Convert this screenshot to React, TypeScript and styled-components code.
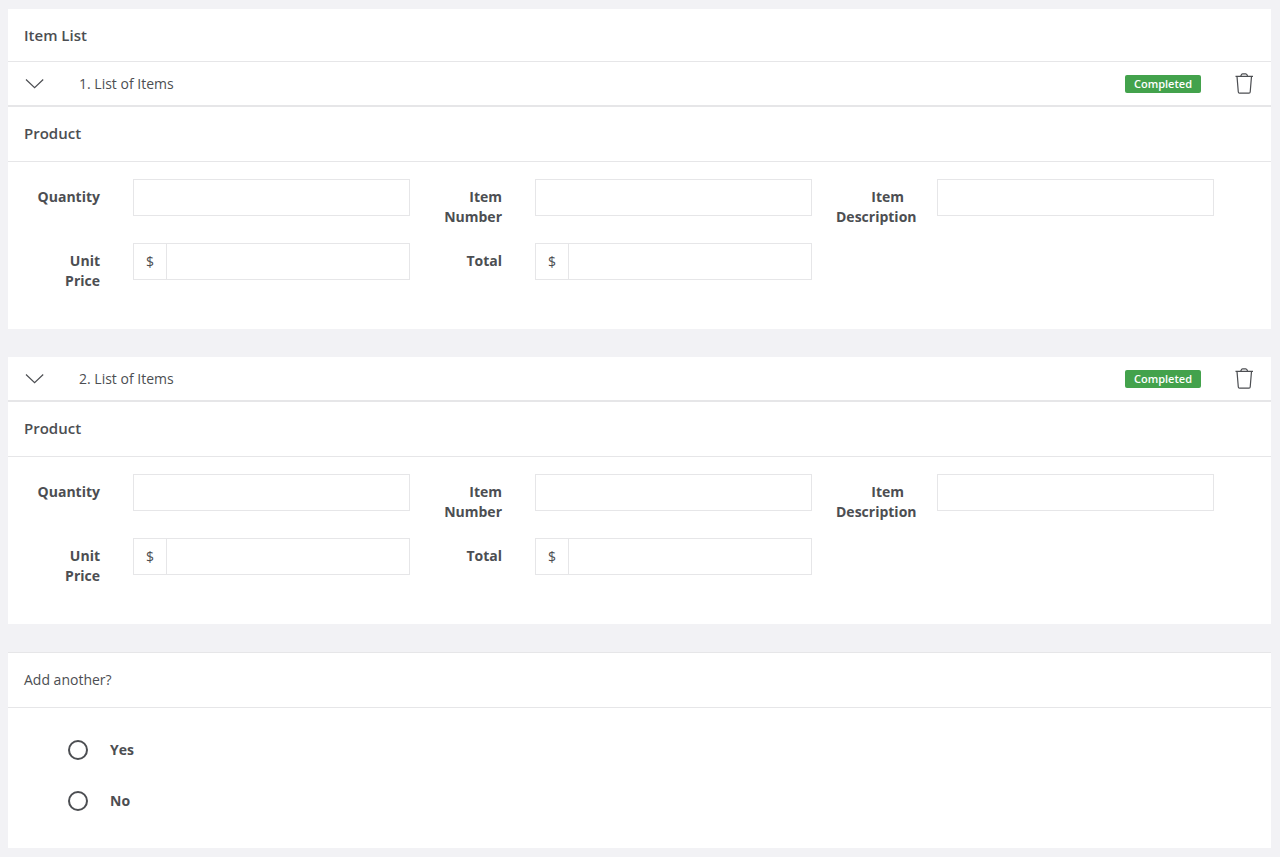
import React from "react";
import styled, { createGlobalStyle } from "styled-components";

const ink = "#4c4e52";
const line = "#e6e6e8";

const GlobalStyle = createGlobalStyle`
  *, *::before, *::after { box-sizing: border-box; }
  body {
    margin: 0;
    background: #f2f2f5;
    color: ${ink};
    font: 14px/20px "Open Sans", "Noto Sans", sans-serif;
  }
`;

const Page = styled.main`
  display: flex;
  flex-direction: column;
  gap: 28px;
  padding: 9px 9px 9px 8px;
`;

const Panel = styled.section`
  background: #fff;
`;

const QuestionPanel = styled(Panel)`
  border-top: 1px solid ${line};
`;

const PanelTitle = styled.h1`
  margin: 0;
  padding: 16px;
  border-bottom: 1px solid ${line};
  font-size: 15px;
  font-weight: 600;
  line-height: 20px;
`;

const SectionTitle = styled.h2`
  margin: 0;
  padding: 16px 16px 18px;
  border-bottom: 1px solid ${line};
  font-size: 15px;
  font-weight: 600;
  line-height: 20px;
`;

const ItemHeader = styled.header`
  display: flex;
  align-items: center;
  height: 45px;
  padding: 1px 16px 0;
  border-bottom: 2px solid ${line};
`;

const IconButton = styled.button`
  display: flex;
  padding: 0;
  border: 0;
  background: none;
  color: ${ink};
  cursor: pointer;
`;

const ItemName = styled.span`
  flex: 1;
  margin-left: 34px;
`;

const Badge = styled.span`
  margin-right: 32px;
  padding: 0 9px;
  border-radius: 2px;
  background: #43a24c;
  color: #fff;
  font-size: 11px;
  font-weight: 600;
  line-height: 18px;
`;

const Fields = styled.div`
  display: grid;
  grid-template-columns: repeat(3, minmax(0, 1fr));
  row-gap: 16px;
  padding: 17px 57px 38px 0;
`;

const Field = styled.div`
  display: flex;
  align-items: flex-start;
`;

const Label = styled.label`
  width: 68px;
  margin: 8px 33px 0 24px;
  font-weight: 700;
  text-align: right;
`;

const InputBox = styled.div`
  display: flex;
  flex: 1;
  height: 37px;
  border: 1px solid ${line};
`;

const Prefix = styled.span`
  width: 33px;
  border-right: 1px solid ${line};
  line-height: 36px;
  text-align: center;
`;

const Input = styled.input`
  flex: 1;
  min-width: 0;
  padding: 0 10px;
  border: 0;
  background: none;
  color: inherit;
  font: inherit;
`;

const Choices = styled.fieldset`
  margin: 0;
  padding: 0;
  border: 0;
`;

const Question = styled.legend`
  width: 100%;
  padding: 17px 16px;
  border-bottom: 1px solid ${line};
`;

const Options = styled.div`
  display: flex;
  flex-direction: column;
  gap: 31px;
  padding: 32px 60px 37px;
`;

const Option = styled.label`
  display: flex;
  align-items: center;
  gap: 22px;
  font-weight: 700;
`;

const Radio = styled.input`
  appearance: none;
  width: 20px;
  height: 20px;
  margin: 0;
  border: 2px solid ${ink};
  border-radius: 50%;
  &:checked {
    box-shadow: inset 0 0 0 3px #fff;
    background: ${ink};
  }
`;

const ChevronIcon = () => (
  <svg width="21" height="20" viewBox="0 0 21 20" fill="none" stroke="currentColor" strokeWidth="1.2" aria-hidden="true">
    <path d="M2 5.5 10.6 13.7 19.2 5.5" />
  </svg>
);

const TrashIcon = () => (
  <svg width="22" height="22" viewBox="0 0 22 22" fill="none" stroke="currentColor" strokeWidth="1.2" aria-hidden="true">
    <path d="M2.5 3.4H20M7.6 3.4C8.2 2 8.4 .9 9.6 .9H12.8C14 .9 14.3 2 14.8 3.4M4 3.4 5.3 19Q5.4 20.1 6.5 20.1H16Q17.1 20.1 17.2 19L18.5 3.4" />
  </svg>
);

const fields = [
  { id: "quantity", label: "Quantity" },
  { id: "number", label: "Item Number" },
  { id: "description", label: "Item Description" },
  { id: "price", label: "Unit Price", prefix: "$" },
  { id: "total", label: "Total", prefix: "$" },
];

function Item({ index }: { index: number }) {
  return (
    <>
      <ItemHeader>
        <IconButton type="button" aria-label="Collapse item"><ChevronIcon /></IconButton>
        <ItemName>{index}. List of Items</ItemName>
        <Badge>Completed</Badge>
        <IconButton type="button" aria-label="Delete item"><TrashIcon /></IconButton>
      </ItemHeader>
      <SectionTitle>Product</SectionTitle>
      <Fields>
        {fields.map(({ id, label, prefix }) => (
          <Field key={id}>
            <Label htmlFor={`${id}-${index}`}>{label}</Label>
            <InputBox>
              {prefix && <Prefix>{prefix}</Prefix>}
              <Input id={`${id}-${index}`} type="text" />
            </InputBox>
          </Field>
        ))}
      </Fields>
    </>
  );
}

export default function App() {
  return (
    <>
      <GlobalStyle />
      <Page>
        <Panel>
          <PanelTitle>Item List</PanelTitle>
          <Item index={1} />
        </Panel>
        <Panel>
          <Item index={2} />
        </Panel>
        <QuestionPanel>
          <Choices>
            <Question>Add another?</Question>
            <Options>
              <Option><Radio type="radio" name="another" value="yes" />Yes</Option>
              <Option><Radio type="radio" name="another" value="no" />No</Option>
            </Options>
          </Choices>
        </QuestionPanel>
      </Page>
    </>
  );
}
